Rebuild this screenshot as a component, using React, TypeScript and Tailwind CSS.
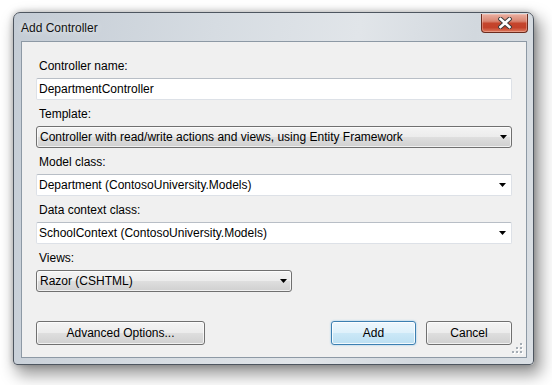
import React from "react";

const font = { fontFamily: '"Liberation Sans", Arial, sans-serif' };

function Arrow() {
  return (
    <svg width="7" height="4" viewBox="0 0 7 4" className="shrink-0">
      <path d="M0 0H7L3.5 4Z" fill="#000" />
    </svg>
  );
}

function Label({ children }: { children: React.ReactNode }) {
  return <div className="h-[16px] leading-[16px] pl-[3px] text-[12px] text-black">{children}</div>;
}

function TextBox({ value }: { value: string }) {
  return (
    <div className="mt-[4px] h-[22px] flex items-center bg-white border border-[#dde1e7] border-t-[#b8bec6] rounded-[2px] pl-[2px] text-[12px] text-black">
      {value}
    </div>
  );
}

function EditCombo({ value }: { value: string }) {
  return (
    <div className="mt-[4px] h-[22px] flex items-center justify-between bg-white border border-[#dde1e7] border-t-[#b8bec6] rounded-[2px] pl-[2px] pr-[5px] text-[12px] text-black">
      <span>{value}</span>
      <Arrow />
    </div>
  );
}

function ButtonCombo({ value, className = "" }: { value: string; className?: string }) {
  return (
    <div
      className={`mt-[4px] h-[22px] flex items-center justify-between border border-[#707070] rounded-[3px] pl-[3px] pr-[4px] text-[12px] text-black bg-[linear-gradient(to_bottom,#f4f4f4_0%,#ececec_48%,#dedede_52%,#d0d0d0_100%)] shadow-[inset_0_0_0_1px_rgba(255,255,255,0.7)] ${className}`}
    >
      <span>{value}</span>
      <Arrow />
    </div>
  );
}

function PushButton({ children, width, primary = false }: { children: React.ReactNode; width: string; primary?: boolean }) {
  return (
    <div
      className={`${width} h-[24px] flex items-center justify-center rounded-[3px] text-[12px] text-black ${
        primary
          ? "border border-[#3c7fb1] bg-[linear-gradient(to_bottom,#eef7fd_0%,#dff1fb_48%,#cbe8f7_52%,#bcdff2_100%)] shadow-[inset_0_0_0_1px_rgba(255,255,255,0.8),0_0_2px_rgba(60,160,230,0.6)]"
          : "border border-[#707070] bg-[linear-gradient(to_bottom,#f4f4f4_0%,#ececec_48%,#dedede_52%,#d0d0d0_100%)] shadow-[inset_0_0_0_1px_rgba(255,255,255,0.7)]"
      }`}
    >
      {children}
    </div>
  );
}

function CloseButton() {
  return (
    <div className="mt-[1px] mr-[5px] w-[47px] h-[19px] flex items-center justify-center rounded-b-[4px] border border-t-0 border-[#6b2b1e] bg-[linear-gradient(to_bottom,#eab0a2_0%,#d98571_40%,#c5452c_52%,#c3422a_75%,#de7a5f_100%)] shadow-[inset_0_0_0_1px_rgba(255,220,210,0.35)]">
      <svg width="14" height="12" viewBox="0 0 14 12">
        <path
          d="M2.5 2L7 6L11.5 2M2.5 10L7 6L11.5 10"
          stroke="#3a3a3a"
          strokeWidth="4.4"
          strokeLinecap="square"
          fill="none"
        />
        <path
          d="M2.5 2L7 6L11.5 2M2.5 10L7 6L11.5 10"
          stroke="#ffffff"
          strokeWidth="2.6"
          strokeLinecap="square"
          fill="none"
        />
      </svg>
    </div>
  );
}

function SizeGrip() {
  const dots = [
    [8, 0],
    [4, 4],
    [8, 4],
    [0, 8],
    [4, 8],
    [8, 8],
  ];
  return (
    <svg width="11" height="11" viewBox="0 0 11 11" className="absolute right-[3px] bottom-[3px]">
      {dots.map(([x, y], i) => (
        <g key={i}>
          <rect x={x + 1} y={y + 1} width="2" height="2" fill="#ffffff" />
          <rect x={x} y={y} width="2" height="2" fill="#a5adb5" />
        </g>
      ))}
    </svg>
  );
}

export default function App() {
  return (
    <div className="w-[552px] h-[385px] bg-white pt-[12px] pl-[13px]" style={font}>
      {/* Window frame */}
      <div className="w-[521px] h-[353px] flex flex-col rounded-t-[7px] rounded-b-[4px] border border-[#4e5660] bg-[linear-gradient(100deg,#c4ccd5_0%,#d6dce2_35%,#e1e5e9_60%,#d2d8de_80%,#dadfe4_100%)] shadow-[0_0_6px_rgba(0,0,0,0.25),5px_8px_16px_2px_rgba(0,0,0,0.4)]">
        {/* Title bar */}
        <div className="h-[28px] flex items-start justify-between">
          <div className="pl-[7px] pt-[7px] text-[12px] leading-[16px] text-[#111] [text-shadow:0_0_6px_rgba(255,255,255,0.9)]">
            Add Controller
          </div>
          <CloseButton />
        </div>

        {/* Client area */}
        <div className="relative ml-[7px] mr-[6px] h-[317px] bg-[#f0f0f0] border border-[#8d99a5] px-[14px] pt-[16px]">
          <Label>Controller name:</Label>
          <TextBox value="DepartmentController" />

          <div className="mt-[6px]">
            <Label>Template:</Label>
            <ButtonCombo value="Controller with read/write actions and views, using Entity Framework" />
          </div>

          <div className="mt-[6px]">
            <Label>Model class:</Label>
            <EditCombo value="Department (ContosoUniversity.Models)" />
          </div>

          <div className="mt-[6px]">
            <Label>Data context class:</Label>
            <EditCombo value="SchoolContext (ContosoUniversity.Models)" />
          </div>

          <div className="mt-[6px]">
            <Label>Views:</Label>
            <ButtonCombo value="Razor (CSHTML)" className="w-[256px]" />
          </div>

          <div className="mt-[29px] flex items-center">
            <PushButton width="w-[169px]">Advanced Options...</PushButton>
            <div className="flex-1" />
            <PushButton width="w-[85px]" primary>
              Add
            </PushButton>
            <div className="w-[10px]" />
            <PushButton width="w-[86px]">Cancel</PushButton>
          </div>

          <SizeGrip />
        </div>
      </div>
    </div>
  );
}
